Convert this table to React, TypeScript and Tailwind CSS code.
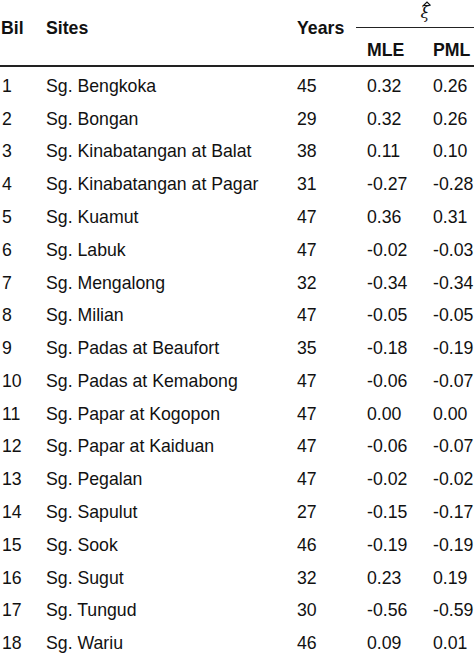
const rows: [string, string, string, string, string][] = [
  ["1", "Sg. Bengkoka", "45", "0.32", "0.26"],
  ["2", "Sg. Bongan", "29", "0.32", "0.26"],
  ["3", "Sg. Kinabatangan at Balat", "38", "0.11", "0.10"],
  ["4", "Sg. Kinabatangan at Pagar", "31", "-0.27", "-0.28"],
  ["5", "Sg. Kuamut", "47", "0.36", "0.31"],
  ["6", "Sg. Labuk", "47", "-0.02", "-0.03"],
  ["7", "Sg. Mengalong", "32", "-0.34", "-0.34"],
  ["8", "Sg. Milian", "47", "-0.05", "-0.05"],
  ["9", "Sg. Padas at Beaufort", "35", "-0.18", "-0.19"],
  ["10", "Sg. Padas at Kemabong", "47", "-0.06", "-0.07"],
  ["11", "Sg. Papar at Kogopon", "47", "0.00", "0.00"],
  ["12", "Sg. Papar at Kaiduan", "47", "-0.06", "-0.07"],
  ["13", "Sg. Pegalan", "47", "-0.02", "-0.02"],
  ["14", "Sg. Sapulut", "27", "-0.15", "-0.17"],
  ["15", "Sg. Sook", "46", "-0.19", "-0.19"],
  ["16", "Sg. Sugut", "32", "0.23", "0.19"],
  ["17", "Sg. Tungud", "30", "-0.56", "-0.59"],
  ["18", "Sg. Wariu", "46", "0.09", "0.01"],
];

export default function App() {
  return (
    <div className="w-[474px] h-[655px] overflow-hidden bg-white text-[#111] font-['Liberation_Sans',Arial,sans-serif] text-[17.7px]">
      <div className="w-[500px]">
        {/* header */}
        <div className="grid grid-cols-[46px_251px_59px_144px] h-[67px] border-b-2 border-[#222]">
          <div className="pl-px pt-[18px] leading-[21px] font-bold">Bil</div>
          <div className="pt-[18px] leading-[21px] font-bold">Sites</div>
          <div className="pt-[18px] leading-[21px] font-bold">Years</div>
          <div className="flex flex-col">
            <div className="h-[28px] border-b border-[#222] flex justify-center items-start pr-[6px]">
              {/* xi with hat */}
              <span className="relative font-['DejaVu_Serif',serif] italic text-[16px] leading-[18px] mt-[4px]">
                ξ
                <svg
                  className="absolute left-[2px] top-[-3px]"
                  width="8"
                  height="5"
                  viewBox="0 0 8 5"
                >
                  <polyline
                    points="0.5,4.5 4,1 7.5,4.5"
                    fill="none"
                    stroke="#111"
                    strokeWidth="1.1"
                  />
                </svg>
              </span>
            </div>
            <div className="grid grid-cols-[77px_67px] pt-[11.5px] leading-[21px] font-bold">
              <span className="pl-[11px]">MLE</span>
              <span>PML</span>
            </div>
          </div>
        </div>

        {/* body */}
        <div className="pt-[2.6px]">
          {rows.map(([bil, site, years, mle, pml]) => (
            <div
              key={bil}
              className="grid grid-cols-[46px_251px_59px_77px_67px] h-[32.8px] items-center whitespace-nowrap"
            >
              <span className="pl-[2px]">{bil}</span>
              <span>{site}</span>
              <span>{years}</span>
              <span className="pl-[11px]">{mle}</span>
              <span>{pml}</span>
            </div>
          ))}
        </div>
      </div>
    </div>
  );
}
